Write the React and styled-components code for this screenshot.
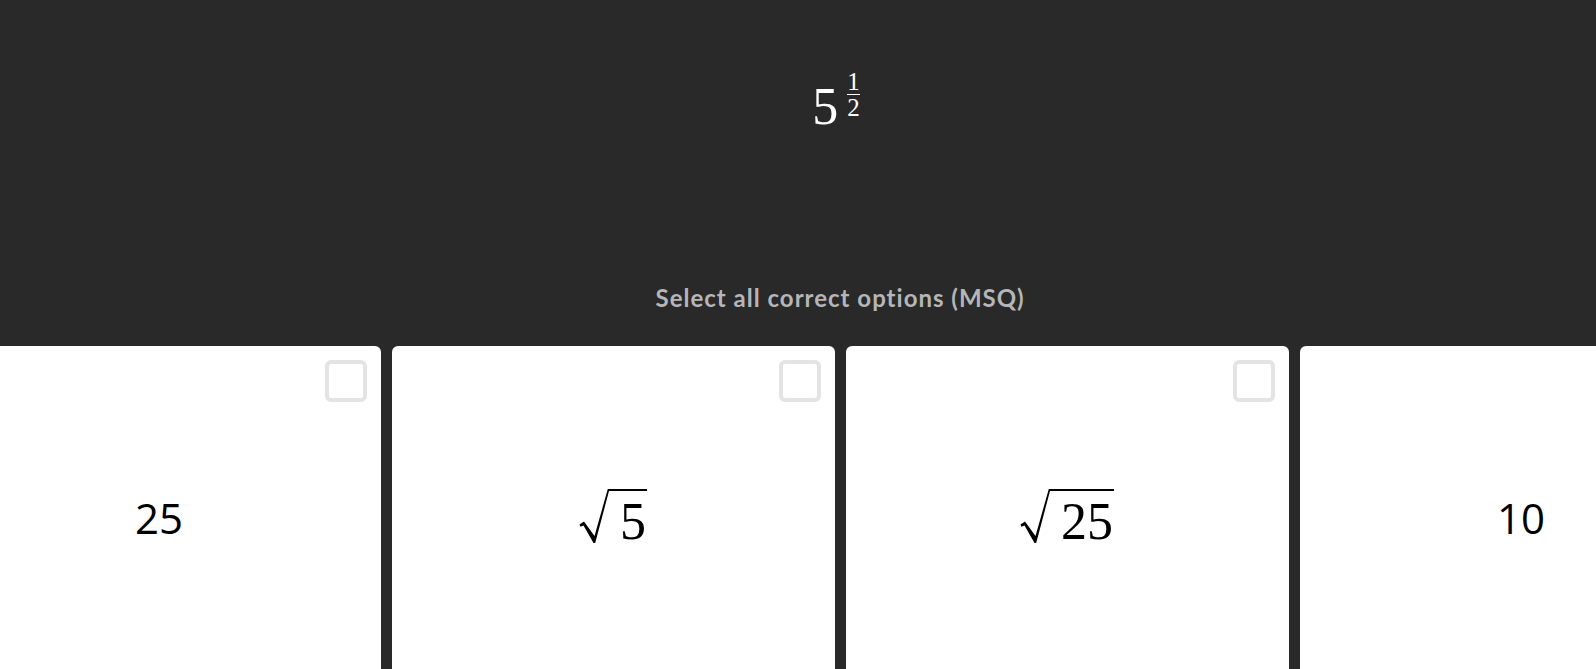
import React from 'react';
import styled, { createGlobalStyle } from 'styled-components';

const GlobalStyle = createGlobalStyle`
  html, body {
    margin: 0;
    padding: 0;
    overflow: hidden;
    background: #292929;
  }
`;

const Page = styled.div`
  width: 1680px;
  height: 669px;
  overflow: hidden;
  display: flex;
  flex-direction: column;
  background: #292929;
`;

const Header = styled.header`
  height: 346px;
  flex-shrink: 0;
  display: flex;
  flex-direction: column;
  align-items: center;
`;

const Question = styled.div`
  flex: 1;
  padding-top: 69px;
  padding-right: 8px;
  color: #ffffff;
  font-family: "Liberation Serif", "Times New Roman", serif;
`;

const Power = styled.span`
  display: inline-flex;
  align-items: flex-start;
`;

const Base = styled.span`
  font-size: 52px;
  line-height: 1;
  margin-top: 12px;
`;

const Frac = styled.span`
  display: inline-flex;
  flex-direction: column;
  align-items: center;
  margin-left: 9px;
  font-size: 25px;
  line-height: 1;
`;

const FracBar = styled.span`
  align-self: stretch;
  height: 1px;
  background: currentColor;
`;

const Hint = styled.p`
  margin: 0 0 34px;
  font-family: "Lato", "Liberation Sans", sans-serif;
  font-weight: 700;
  font-size: 24px;
  letter-spacing: 1px;
  color: #b4b6b8;
`;

const Options = styled.div`
  display: flex;
  justify-content: center;
  gap: 11px;
`;

const Card = styled.div`
  position: relative;
  flex-shrink: 0;
  width: 443px;
  height: 344px;
  background: #ffffff;
  border-radius: 6px 6px 0 0;
  display: flex;
  align-items: center;
  justify-content: center;
`;

const Check = styled.span`
  position: absolute;
  top: 14px;
  right: 14px;
  width: 42px;
  height: 42px;
  box-sizing: border-box;
  border: 4px solid #e4e4e4;
  border-radius: 6px;
`;

const PlainText = styled.span`
  font-family: "Open Sans", "Liberation Sans", sans-serif;
  font-size: 42px;
  color: #000000;
  line-height: 1;
`;

const Sqrt = styled.span`
  display: inline-flex;
  align-items: flex-start;
  color: #000000;
  font-family: "Liberation Serif", "Times New Roman", serif;
`;

const Radical = styled.svg`
  width: 31px;
  height: 54px;
  display: block;
`;

const Radicand = styled.span`
  border-top: 2px solid #000000;
  padding: 5px 1px 0 10px;
  font-size: 52px;
  line-height: 1;
`;

const RadicalSign = () => (
  <Radical viewBox="0 0 31 54">
    <path d="M0.5 35.5 L5 32.5 L15.5 47 L28.8 0 L31 0 L31 2 L30 2 L16.2 54 L14.5 54 L4.5 36.5 L1.5 37.8 Z" fill="#000" />
  </Radical>
);

const SquareRoot = ({ children }) => (
  <Sqrt>
    <RadicalSign />
    <Radicand>{children}</Radicand>
  </Sqrt>
);

const options = [
  { id: 1, content: <PlainText>25</PlainText> },
  { id: 2, content: <SquareRoot>5</SquareRoot> },
  { id: 3, content: <SquareRoot>25</SquareRoot> },
  { id: 4, content: <PlainText>10</PlainText> },
];

const App = () => (
  <Page>
    <GlobalStyle />
    <Header>
      <Question>
        <Power>
          <Base>5</Base>
          <Frac>
            <span>1</span>
            <FracBar />
            <span>2</span>
          </Frac>
        </Power>
      </Question>
      <Hint>Select all correct options (MSQ)</Hint>
    </Header>
    <Options>
      {options.map((option) => (
        <Card key={option.id}>
          <Check />
          {option.content}
        </Card>
      ))}
    </Options>
  </Page>
);

export default App;
